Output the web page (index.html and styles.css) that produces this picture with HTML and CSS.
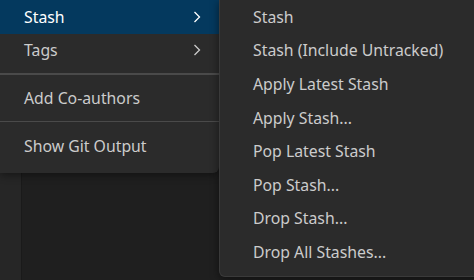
FILE: index.html
```html
<!DOCTYPE html>
<html lang="en">
<head>
    <meta charset="UTF-8">
    <title>Source Control Menu</title>
    <link rel="stylesheet" href="styles.css">
</head>
<body>
    <div class="stage">
        <!-- Parent menu and the window behind it -->
        <div class="left-col">
            <ul class="menu main-menu">
                <li class="item active">
                    <span>Stash</span>
                    <svg class="chevron" width="8" height="12" viewBox="0 0 8 12"><path d="M1.5 1 L6.5 6 L1.5 11" fill="none" stroke="currentColor" stroke-width="1.3"/></svg>
                </li>
                <li class="item">
                    <span>Tags</span>
                    <svg class="chevron" width="8" height="12" viewBox="0 0 8 12"><path d="M1.5 1 L6.5 6 L1.5 11" fill="none" stroke="currentColor" stroke-width="1.3"/></svg>
                </li>
                <li class="separator"></li>
                <li class="item"><span>Add Co-authors</span></li>
                <li class="separator"></li>
                <li class="item"><span>Show Git Output</span></li>
            </ul>
            <div class="backdrop">
                <div class="sidebar"></div>
                <div class="editor"></div>
            </div>
        </div>

        <!-- Stash submenu -->
        <ul class="menu sub-menu">
            <li class="item">Stash</li>
            <li class="item">Stash (Include Untracked)</li>
            <li class="item">Apply Latest Stash</li>
            <li class="item">Apply Stash...</li>
            <li class="item">Pop Latest Stash</li>
            <li class="item">Pop Stash...</li>
            <li class="item">Drop Stash...</li>
            <li class="item">Drop All Stashes...</li>
        </ul>
    </div>
</body>
</html>
```

FILE: styles.css
```css
/* Dark editor chrome */
body {
    margin: 0;
    background-color: #1f1f1f;
    font-family: "Noto Sans", "Open Sans", sans-serif;
    overflow: hidden;
}

.stage {
    display: flex;
    width: 474px;
    height: 280px;
}

.left-col {
    width: 219px;
    flex-shrink: 0;
    display: flex;
    flex-direction: column;
}

/* Shared menu look */
.menu {
    list-style: none;
    margin: 0;
    padding: 0;
    background-color: #2b2b2b;
    color: #cccccc;
    font-size: 15.8px;
}

.item {
    height: 33.6px;
    display: flex;
    align-items: center;
    justify-content: space-between;
    white-space: nowrap;
}

.main-menu {
    height: 173px;
    border-radius: 0 0 6px 0;
    box-shadow: 0 2px 8px rgba(0, 0, 0, 0.45);
    position: relative;
    z-index: 1;
}

.main-menu .item {
    padding: 0 18px 0 24px;
}

.main-menu .item.active {
    background-color: #04395e;
    color: #ffffff;
}

.chevron {
    color: #cccccc;
}

.active .chevron {
    color: #ffffff;
}

.separator {
    height: 1.5px;
    margin: 6px 0 6.5px;
    background-color: #4a4a4a;
}

/* What shows under the parent menu */
.backdrop {
    flex: 1;
    display: flex;
}

.sidebar {
    width: 21px;
    background-color: #262626;
    border-right: 1px solid #1a1a1a;
}

.editor {
    flex: 1;
    background-color: #1f1f1f;
}

/* Submenu */
.sub-menu {
    width: 262px;
    flex-shrink: 0;
    height: 277px;
    border: 1px solid #3a3a3a;
    border-top: none;
    border-radius: 0 0 6px 6px;
    box-shadow: 0 2px 8px rgba(0, 0, 0, 0.5);
    box-sizing: border-box;
    padding-left: 33px;
    position: relative;
    z-index: 2;
}
```
